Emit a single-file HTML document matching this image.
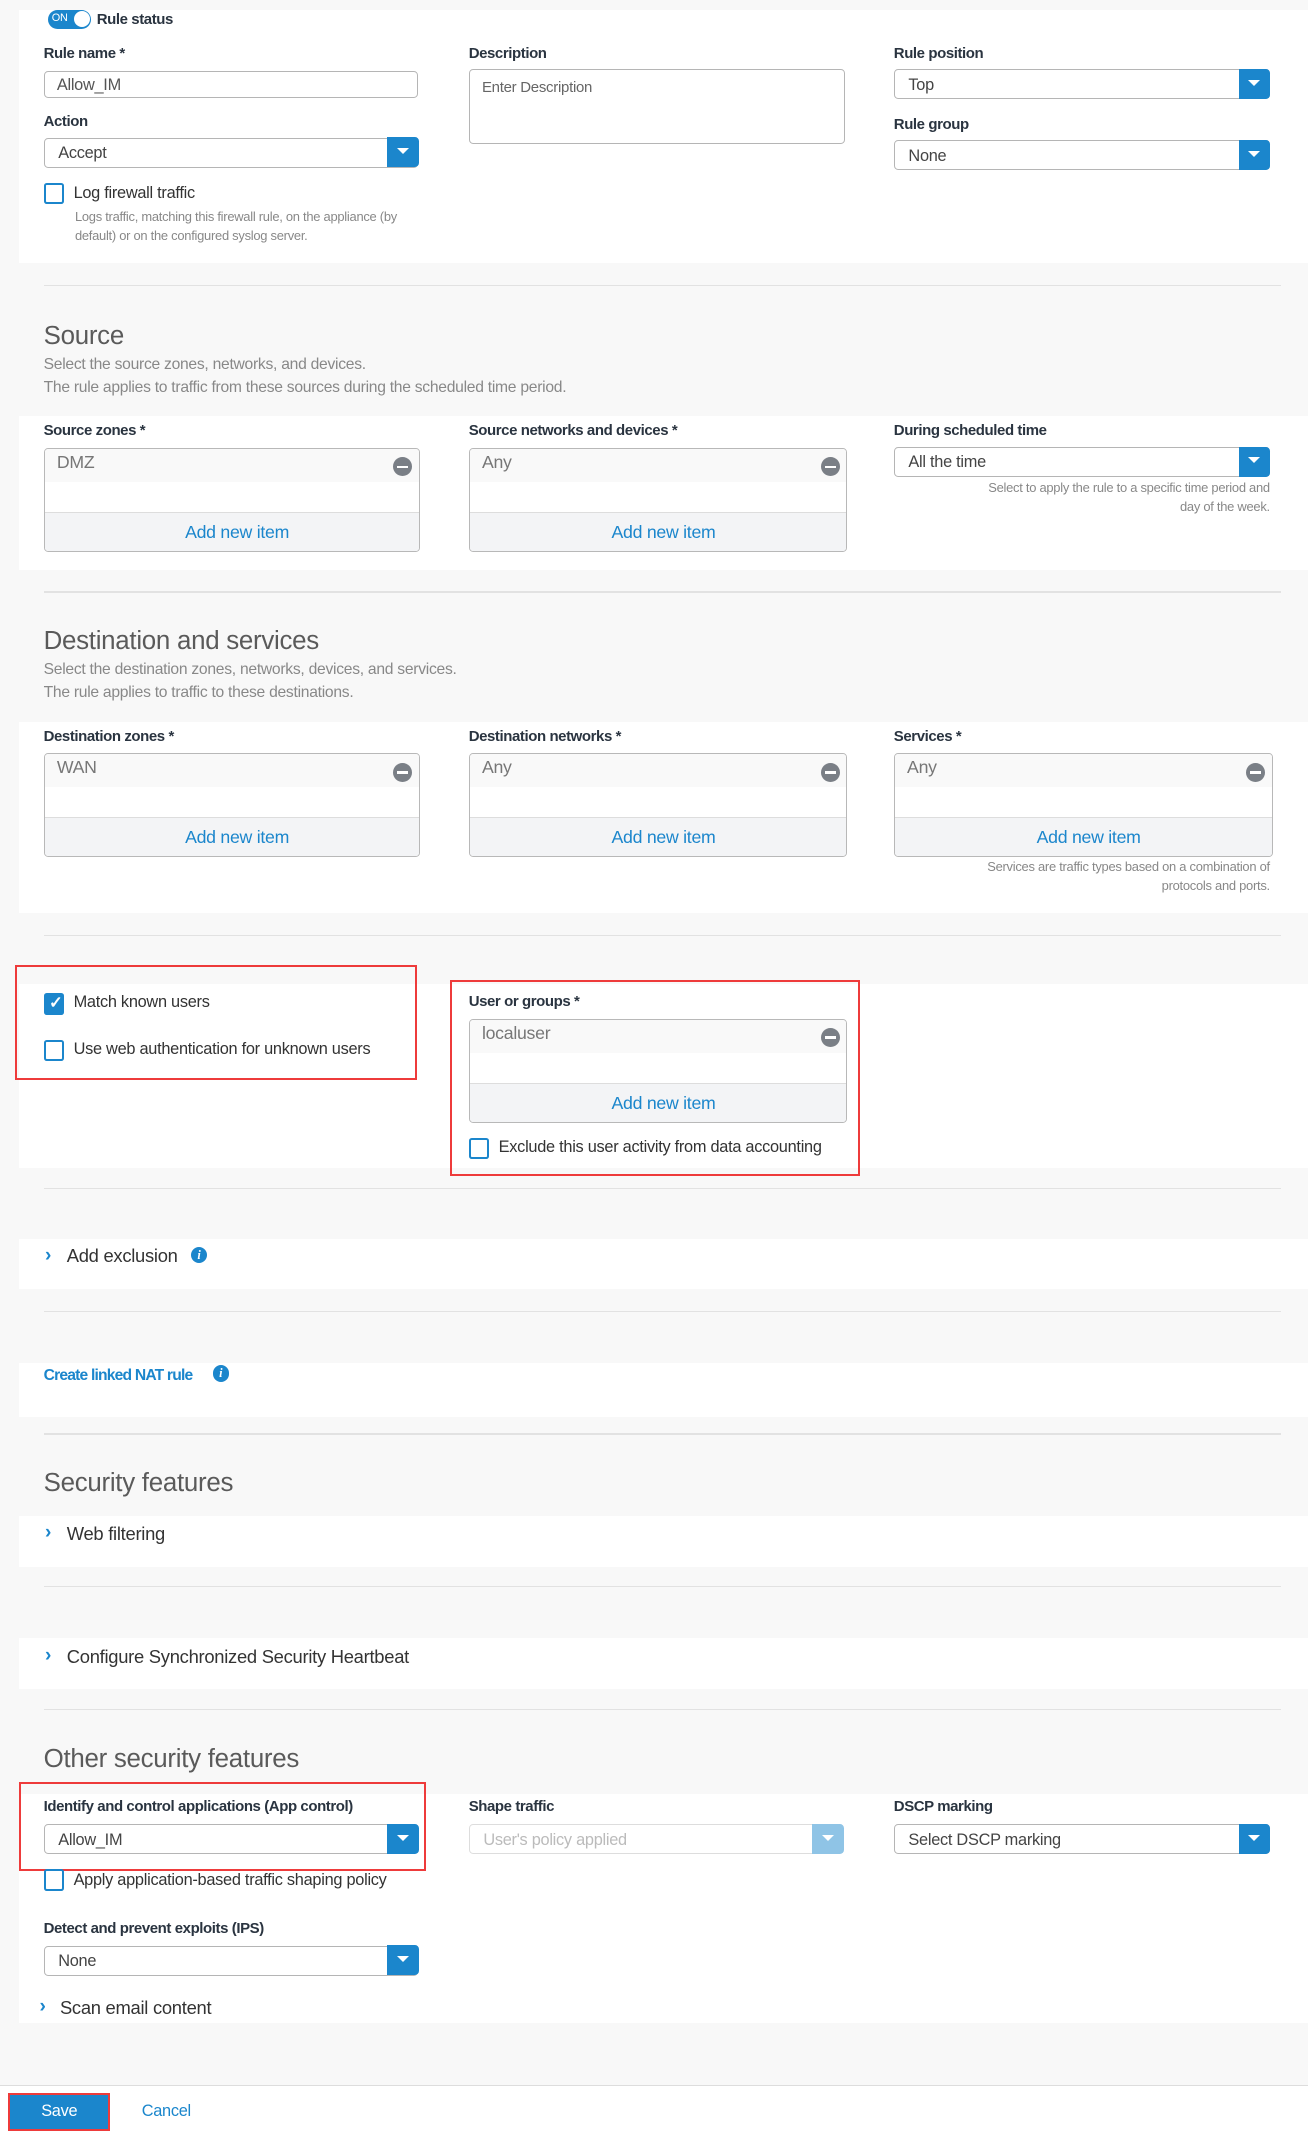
<!DOCTYPE html>
<html><head><meta charset="utf-8"><style>
html,body{margin:0;padding:0;background:#f8f8f8;}
#w{position:relative;width:960px;height:1569px;zoom:1.3625;overflow:hidden;font-family:"Liberation Sans",sans-serif;color:#333;letter-spacing:-0.2px;}
.a{position:absolute;}
.wp{position:absolute;background:#fff;left:14px;right:0;}
.hr{position:absolute;left:32px;width:908px;height:1px;background:#e2e2e2;}
.lb{position:absolute;font-size:11px;font-weight:bold;color:#2a3440;letter-spacing:-0.3px;}
.in{position:absolute;height:20px;border:1px solid #b5b5b5;border-radius:3px;background:#fff;box-sizing:border-box;font-size:12px;color:#555;padding:3px 0 0 9px;}
.sel{position:absolute;height:22px;border:1px solid #b5b5b5;border-radius:3px;background:#fff;box-sizing:border-box;font-size:12px;color:#444;padding:4px 0 0 10px;}
.sel .b{position:absolute;right:-1px;top:-1px;width:23px;height:22px;background:#1b86cc;border-radius:0 3px 3px 0;}
.sel .b:after{content:"";position:absolute;left:7px;top:8px;border-left:5px solid transparent;border-right:5px solid transparent;border-top:5px solid #fff;}
.lst{position:absolute;width:276px;height:76px;border:1px solid #b8b8b8;border-radius:3px;box-sizing:border-box;background:#fff;overflow:hidden;}
.lst .t{height:24px;background:#f9f9f9;font-size:13px;color:#777;padding:2px 0 0 9px;box-sizing:border-box;position:relative;}
.lst .m{position:absolute;right:5px;top:6px;width:14px;height:14px;border-radius:50%;background:#7a7f86;}
.lst .m:after{content:"";position:absolute;left:3px;top:6px;width:8px;height:2px;background:#fff;}
.lst .f{position:absolute;left:0;right:0;bottom:0;height:28px;border-top:1px solid #ddd;background:#f3f4f6;text-align:center;font-size:13px;color:#1b86cc;line-height:28px;padding-left:8px;}
.cb{position:absolute;width:12px;height:13px;border:1.5px solid #1b86cc;border-radius:2px;background:#fff;}
.cbt{position:absolute;font-size:12px;color:#333;}
.h2{position:absolute;font-size:19px;color:#5a5a5a;font-weight:normal;}
.hint{position:absolute;font-size:11.5px;color:#888;line-height:17px;}
.sm{position:absolute;font-size:9.5px;color:#888;line-height:14px;}
.chev{position:absolute;color:#1b86cc;font-size:14px;font-weight:bold;}
.red{position:absolute;border:2px solid #ee3b3b;box-sizing:border-box;}
.info{position:absolute;width:12px;height:12px;border-radius:50%;background:#1b86cc;color:#fff;font-size:9px;font-weight:bold;font-style:italic;text-align:center;line-height:12px;font-family:"Liberation Serif",serif;}
</style></head><body><div id="w">

<div class="wp" style="top:7px;height:186px"></div>
<div class="a" style="left:35px;top:7px;width:32px;height:14px;border-radius:7px;background:#1b86cc"></div>
<div class="a" style="left:38px;top:9px;font-size:8px;color:#fff">ON</div>
<div class="a" style="left:54px;top:8px;width:12px;height:12px;border-radius:50%;background:#fff"></div>
<div class="lb" style="left:71px;top:8px">Rule status</div>

<div class="lb" style="left:32px;top:33px">Rule name *</div>
<div class="in" style="left:32px;top:52px;width:275px;height:20px">Allow_IM</div>
<div class="lb" style="left:32px;top:83px">Action</div>
<div class="sel" style="left:32px;top:101px;width:275px">Accept<div class="b"></div></div>
<div class="cb" style="left:32px;top:134px"></div>
<div class="cbt" style="left:54px;top:135px">Log firewall traffic</div>
<div class="sm" style="left:55px;top:152px">Logs traffic, matching this firewall rule, on the appliance (by<br>default) or on the configured syslog server.</div>

<div class="lb" style="left:344px;top:33px">Description</div>
<div class="in" style="left:344px;top:51px;width:276px;height:55px;font-size:11px;color:#666;padding-top:6px">Enter Description</div>

<div class="lb" style="left:656px;top:33px">Rule position</div>
<div class="sel" style="left:656px;top:51px;width:276px">Top<div class="b"></div></div>
<div class="lb" style="left:656px;top:85px">Rule group</div>
<div class="sel" style="left:656px;top:103px;width:276px">None<div class="b"></div></div>

<div class="hr" style="top:209px"></div>
<div class="h2" style="left:32px;top:236px">Source</div>
<div class="hint" style="left:32px;top:259px">Select the source zones, networks, and devices.<br>The rule applies to traffic from these sources during the scheduled time period.</div>
<div class="wp" style="top:305px;height:113px"></div>
<div class="lb" style="left:32px;top:310px">Source zones *</div>
<div class="lst" style="left:32px;top:329px"><div class="t">DMZ<div class="m"></div></div><div class="f">Add new item</div></div>
<div class="lb" style="left:344px;top:310px">Source networks and devices *</div>
<div class="lst" style="left:344px;top:329px;width:278px"><div class="t">Any<div class="m"></div></div><div class="f">Add new item</div></div>
<div class="lb" style="left:656px;top:310px">During scheduled time</div>
<div class="sel" style="left:656px;top:328px;width:276px">All the time<div class="b"></div></div>
<div class="sm" style="left:656px;top:351px;width:276px;text-align:right">Select to apply the rule to a specific time period and<br>day of the week.</div>

<div class="hr" style="top:434px"></div>
<div class="h2" style="left:32px;top:460px">Destination and services</div>
<div class="hint" style="left:32px;top:483px">Select the destination zones, networks, devices, and services.<br>The rule applies to traffic to these destinations.</div>
<div class="wp" style="top:530px;height:140px"></div>
<div class="lb" style="left:32px;top:534px">Destination zones *</div>
<div class="lst" style="left:32px;top:553px"><div class="t">WAN<div class="m"></div></div><div class="f">Add new item</div></div>
<div class="lb" style="left:344px;top:534px">Destination networks *</div>
<div class="lst" style="left:344px;top:553px;width:278px"><div class="t">Any<div class="m"></div></div><div class="f">Add new item</div></div>
<div class="lb" style="left:656px;top:534px">Services *</div>
<div class="lst" style="left:656px;top:553px;width:278px"><div class="t">Any<div class="m"></div></div><div class="f">Add new item</div></div>
<div class="sm" style="left:656px;top:629px;width:276px;text-align:right">Services are traffic types based on a combination of<br>protocols and ports.</div>

<div class="hr" style="top:686px"></div>
<div class="wp" style="top:722px;height:135px"></div>
<div class="cb" style="left:32px;top:729px;background:#1b86cc"></div>
<div class="a" style="left:36px;top:729px;color:#fff;font-size:12px;font-weight:bold">✓</div>
<div class="cbt" style="left:54px;top:729px">Match known users</div>
<div class="cb" style="left:32px;top:763px"></div>
<div class="cbt" style="left:54px;top:763px">Use web authentication for unknown users</div>
<div class="red" style="left:11px;top:708px;width:295px;height:85px"></div>

<div class="lb" style="left:344px;top:729px">User or groups *</div>
<div class="lst" style="left:344px;top:748px;width:278px"><div class="t">localuser<div class="m"></div></div><div class="f">Add new item</div></div>
<div class="cb" style="left:344px;top:835px"></div>
<div class="cbt" style="left:366px;top:835px">Exclude this user activity from data accounting</div>
<div class="red" style="left:330px;top:719px;width:301px;height:144px"></div>

<div class="hr" style="top:872px"></div>
<div class="wp" style="top:909px;height:37px"></div>
<div class="chev" style="left:33px;top:914px">›</div>
<div class="a" style="left:49px;top:914px;font-size:13.5px;color:#333">Add exclusion</div>
<div class="info" style="left:140px;top:915px">i</div>

<div class="hr" style="top:962px"></div>
<div class="wp" style="top:1000px;height:40px"></div>
<div class="a" style="left:32px;top:1003px;font-size:11.5px;font-weight:bold;color:#1b86cc;letter-spacing:-0.6px">Create linked NAT rule</div>
<div class="info" style="left:156px;top:1002px">i</div>

<div class="hr" style="top:1052px"></div>
<div class="h2" style="left:32px;top:1078px">Security features</div>
<div class="wp" style="top:1113px;height:37px"></div>
<div class="chev" style="left:33px;top:1117px">›</div>
<div class="a" style="left:49px;top:1118px;font-size:13.5px;color:#333">Web filtering</div>

<div class="hr" style="top:1164px"></div>
<div class="wp" style="top:1202px;height:38px"></div>
<div class="chev" style="left:33px;top:1207px">›</div>
<div class="a" style="left:49px;top:1208px;font-size:13.5px;color:#333">Configure Synchronized Security Heartbeat</div>

<div class="hr" style="top:1254px"></div>
<div class="h2" style="left:32px;top:1281px">Other security features</div>
<div class="wp" style="top:1317px;height:168px"></div>
<div class="lb" style="left:32px;top:1320px">Identify and control applications (App control)</div>
<div class="sel" style="left:32px;top:1339px;width:275px">Allow_IM<div class="b"></div></div>
<div class="red" style="left:14px;top:1308px;width:299px;height:65px"></div>
<div class="cb" style="left:32px;top:1372px"></div>
<div class="cbt" style="left:54px;top:1373px">Apply application-based traffic shaping policy</div>
<div class="lb" style="left:344px;top:1320px">Shape traffic</div>
<div class="sel" style="left:344px;top:1339px;width:275px;color:#bbb;border-color:#ddd">User's policy applied<div class="b" style="background:#8fc4e6"></div></div>
<div class="lb" style="left:656px;top:1320px">DSCP marking</div>
<div class="sel" style="left:656px;top:1339px;width:276px">Select DSCP marking<div class="b"></div></div>
<div class="lb" style="left:32px;top:1409px">Detect and prevent exploits (IPS)</div>
<div class="sel" style="left:32px;top:1428px;width:275px">None<div class="b"></div></div>
<div class="chev" style="left:29px;top:1465px">›</div>
<div class="a" style="left:44px;top:1466px;font-size:13.5px;color:#333">Scan email content</div>

<div class="a" style="left:0;top:1530px;width:960px;height:40px;background:#fff;border-top:1px solid #ddd"></div>
<div class="a" style="left:6px;top:1536px;width:75px;height:28px;background:#1b86cc;border:2px solid #ee3b3b;box-sizing:border-box;color:#fff;font-size:12px;text-align:center;line-height:24px">Save</div>
<div class="a" style="left:104px;top:1543px;font-size:12px;color:#1b86cc">Cancel</div>
</div></body></html>
